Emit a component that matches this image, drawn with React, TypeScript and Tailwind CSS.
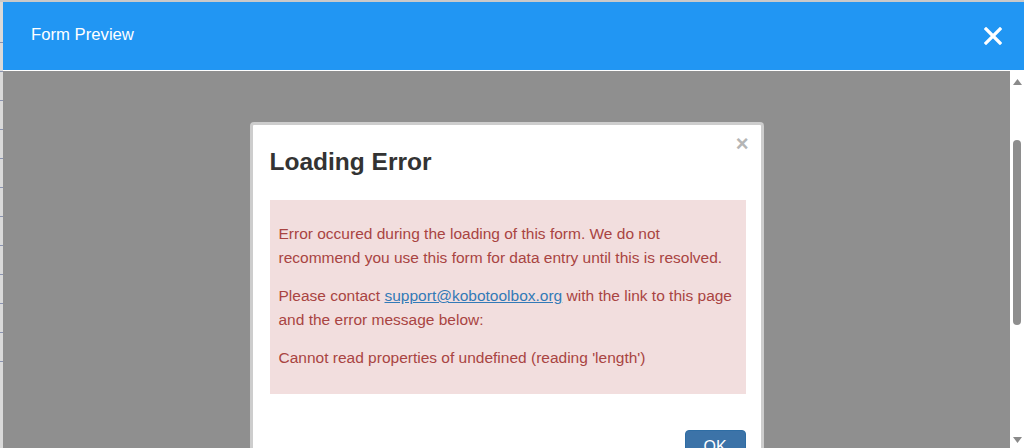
export default function App() {
  return (
    <div className="h-[448px] w-[1024px] overflow-hidden bg-[#d6d6d6] flex flex-col font-['Liberation_Sans',Arial,sans-serif]">
      <div className="h-[2px] bg-[#c9c9c9]" />
      <div className="flex-1 flex min-h-0">
        {/* left strip of the page behind */}
        <div className="w-[3px] bg-[#d9d9d9] flex flex-col gap-[28px] pt-[40px]">
          {[0, 1, 2, 3, 4, 5, 6, 7, 8, 9, 10, 11].map((i) => (
            <div key={i} className="h-[1px] w-[3px] bg-[#8a93b0]" />
          ))}
        </div>
        <div className="flex-1 flex flex-col min-h-0">
          {/* header */}
          <div className="h-[69px] bg-[#2196f3] flex items-center justify-between pl-[28px] pr-[22px] border-b border-white">
            <span className="text-white text-[16.7px] -mt-[2px]">Form Preview</span>
            <svg width="18" height="18" viewBox="0 0 18 18">
              <path d="M2 2 L16 16 M16 2 L2 16" stroke="white" strokeWidth="3.2" strokeLinecap="square" />
            </svg>
          </div>
          <div className="flex-1 flex min-h-0">
            {/* gray overlay area */}
            <div className="flex-1 bg-[#8f8f8f] flex justify-center pt-[51px] overflow-hidden">
              <div className="w-[514px] h-[360px] shrink-0 border-[3px] border-[#cdcdcd] rounded-[4px] bg-white relative pl-[17px] pr-[15px] pt-[24px]">
                <button className="absolute right-[12px] top-[8px] text-[#b5b5b5] text-[22px] leading-none font-bold">
                  ×
                </button>
                <h4 className="text-[24.5px] font-bold text-[#333333] leading-[26px]">Loading Error</h4>
                <div className="mt-[25px] bg-[#f2dede] text-[#a94442] text-[15.5px] leading-[24px] px-[9px] pt-[22px] pb-[24px] flex flex-col gap-[14px]">
                  <p>
                    Error occured during the loading of this form. We do not recommend you use this form for data entry until this is resolved.
                  </p>
                  <p>
                    Please contact{" "}
                    <a href="#" className="text-[#337ab7] underline">
                      support@kobotoolbox.org
                    </a>{" "}
                    with the link to this page and the error message below:
                  </p>
                  <p>Cannot read properties of undefined (reading 'length')</p>
                </div>
                <div className="flex justify-end mt-[36px]">
                  <button className="bg-[#3c73a8] text-white text-[16px] rounded-[4px] w-[61px] h-[34px] border border-[#2e6da4]">
                    OK
                  </button>
                </div>
              </div>
            </div>
            {/* scrollbar */}
            <div className="w-[14px] bg-white flex flex-col items-center justify-between pt-[8px] pb-[5px]">
              <svg width="9" height="6" viewBox="0 0 9 6">
                <path d="M0 6 L4.5 0 L9 6 Z" fill="#8a8a8a" />
              </svg>
              <div className="flex-1 w-full flex flex-col items-center pt-[55px]">
                <div className="w-[8px] h-[185px] rounded-full bg-[#8e8e8e]" />
              </div>
              <svg width="9" height="6" viewBox="0 0 9 6">
                <path d="M0 0 L4.5 6 L9 0 Z" fill="#8a8a8a" />
              </svg>
            </div>
          </div>
        </div>
      </div>
    </div>
  );
}
